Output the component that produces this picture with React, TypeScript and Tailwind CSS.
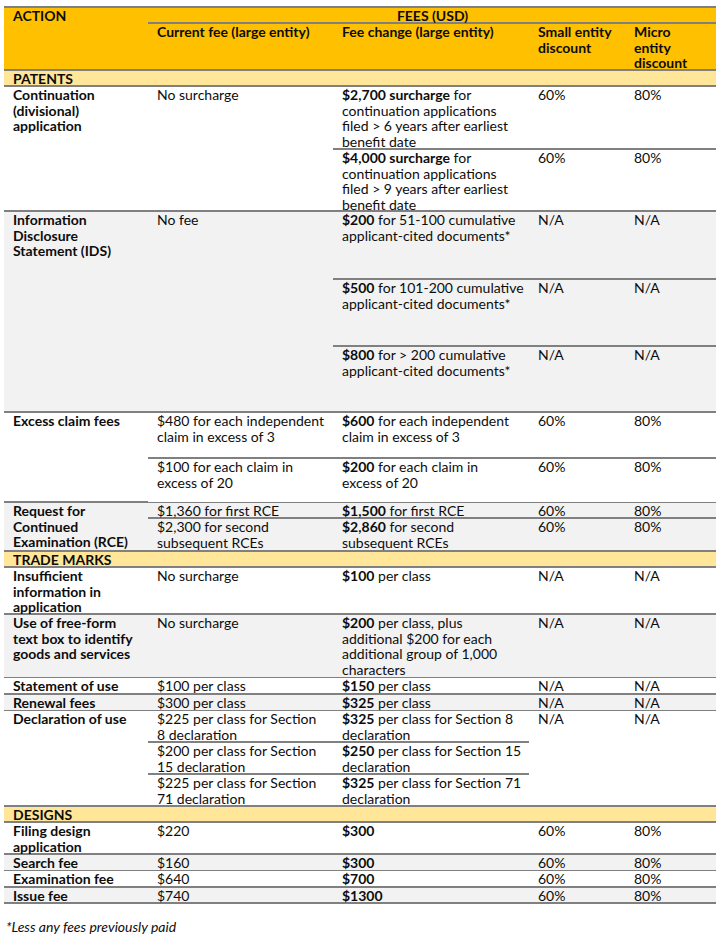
import type { ReactNode } from 'react'

const line = 'border-b-2 border-[#808080]'
const thin = 'border-b border-[#808080]'

function Td({
  children,
  className = '',
  rowSpan,
  colSpan,
  b = line,
  h = '',
}: {
  children?: ReactNode
  className?: string
  rowSpan?: number
  colSpan?: number
  b?: string
  h?: string
}) {
  return (
    <td rowSpan={rowSpan} colSpan={colSpan} className={`align-top p-0 pl-[9px] pr-[8px] ${b} ${className}`}>
      <div className={h}>{children}</div>
    </td>
  )
}

// fee change column is a touch wider
function Fc(props: { children?: ReactNode; b?: string; h?: string; className?: string }) {
  return <Td {...props} className={`!pr-[4px] ${props.className ?? ''}`} />
}

function Section({ title }: { title: string }) {
  return (
    <tr className="bg-[#FFE699]">
      <Td colSpan={5} className="font-bold" h="h-[14px]">
        {title}
      </Td>
    </tr>
  )
}

// one row of the five columns, all cells same height
function Row({
  cells,
  h,
  b = line,
  bg = '',
}: {
  cells: ReactNode[]
  h: string
  b?: string
  bg?: string
}) {
  return (
    <tr className={bg}>
      {cells.map((c, i) =>
        i === 2 ? (
          <Fc key={i} b={b} h={h}>
            {c}
          </Fc>
        ) : (
          <Td key={i} b={b} h={h} className={i === 0 ? 'font-bold' : ''}>
            {c}
          </Td>
        ),
      )}
    </tr>
  )
}

export default function App() {
  return (
    <div
      className="min-h-[935px] bg-white pl-[4px] pt-[6px] text-[14px] leading-[15.5px] text-[#0d0d0d]"
      style={{ fontFamily: 'Lato, "Open Sans", sans-serif' }}
    >
      <div className="w-[712px] border-t-2 border-[#808080]">
        <table className="w-[712px] table-fixed border-separate border-spacing-0">
          <colgroup>
            <col className="w-[144px]" />
            <col className="w-[185px]" />
            <col className="w-[196px]" />
            <col className="w-[96px]" />
            <col className="w-[91px]" />
          </colgroup>
          <tbody>
            <tr className="bg-[#FFC000] font-bold">
              <Td rowSpan={2}>ACTION</Td>
              <Td colSpan={4} className="text-center" h="h-[14px]">
                FEES (USD)
              </Td>
            </tr>
            <tr className="bg-[#FFC000] font-bold">
              <Td h="h-[45px]">Current fee (large entity)</Td>
              <Fc h="h-[45px]">Fee change (large entity)</Fc>
              <Td h="h-[45px]">Small entity discount</Td>
              <Td h="h-[45px]">Micro entity discount</Td>
            </tr>

            <Section title="PATENTS" />
            <tr>
              <Td rowSpan={2} className="font-bold">
                Continuation (divisional) application
              </Td>
              <Td rowSpan={2}>No surcharge</Td>
              <Fc h="h-[61px]">
                <b>$2,700 surcharge</b> for continuation applications filed &gt; 6 years after earliest benefit date
              </Fc>
              <Td h="h-[61px]">60%</Td>
              <Td h="h-[61px]">80%</Td>
            </tr>
            <tr>
              <Fc h="h-[60px]">
                <b>$4,000 surcharge</b> for continuation applications filed &gt; 9 years after earliest benefit date
              </Fc>
              <Td h="h-[60px]">60%</Td>
              <Td h="h-[60px]">80%</Td>
            </tr>

            <tr className="bg-[#F2F2F2]">
              <Td rowSpan={3} className="font-bold">
                Information Disclosure Statement (IDS)
              </Td>
              <Td rowSpan={3}>No fee</Td>
              <Fc h="h-[66px]">
                <b>$200</b> for 51-100 cumulative applicant-cited documents*
              </Fc>
              <Td h="h-[66px]">N/A</Td>
              <Td h="h-[66px]">N/A</Td>
            </tr>
            <tr className="bg-[#F2F2F2]">
              <Fc h="h-[65px]">
                <b>$500</b> for 101-200 cumulative applicant-cited documents*
              </Fc>
              <Td h="h-[65px]">N/A</Td>
              <Td h="h-[65px]">N/A</Td>
            </tr>
            <tr className="bg-[#F2F2F2]">
              <Fc h="h-[64px]">
                <b>$800</b> for &gt; 200 cumulative applicant-cited documents*
              </Fc>
              <Td h="h-[64px]">N/A</Td>
              <Td h="h-[64px]">N/A</Td>
            </tr>

            <tr>
              <Td rowSpan={2} className="font-bold">
                Excess claim fees
              </Td>
              <Td h="h-[44px]">$480 for each independent claim in excess of 3</Td>
              <Fc h="h-[44px]">
                <b>$600</b> for each independent claim in excess of 3
              </Fc>
              <Td h="h-[44px]">60%</Td>
              <Td h="h-[44px]">80%</Td>
            </tr>
            <tr>
              <Td b={thin} h="h-[43px]">
                $100 for each claim in excess of 20
              </Td>
              <Fc b={thin} h="h-[43px]">
                <b>$200</b> for each claim in
                <br />
                excess of 20
              </Fc>
              <Td b={thin} h="h-[43px]">
                60%
              </Td>
              <Td b={thin} h="h-[43px]">
                80%
              </Td>
            </tr>

            <tr className="bg-[#F2F2F2]">
              <Td rowSpan={2} className="font-bold">
                Request for Continued Examination (RCE)
              </Td>
              <Td h="h-[14px]">$1,360 for first RCE</Td>
              <Fc h="h-[14px]">
                <b>$1,500</b> for first RCE
              </Fc>
              <Td h="h-[14px]">60%</Td>
              <Td h="h-[14px]">80%</Td>
            </tr>
            <tr className="bg-[#F2F2F2]">
              <Td h="h-[31px]">$2,300 for second subsequent RCEs</Td>
              <Fc h="h-[31px]">
                <b>$2,860</b> for second subsequent RCEs
              </Fc>
              <Td h="h-[31px]">60%</Td>
              <Td h="h-[31px]">80%</Td>
            </tr>

            <Section title="TRADE MARKS" />
            <Row
              h="h-[45px]"
              cells={[
                'Insufficient information in application',
                'No surcharge',
                <>
                  <b>$100</b> per class
                </>,
                'N/A',
                'N/A',
              ]}
            />
            <Row
              h="h-[62px]"
              b={thin}
              bg="bg-[#F2F2F2]"
              cells={[
                'Use of free-form text box to identify goods and services',
                'No surcharge',
                <>
                  <b>$200</b> per class, plus additional $200 for each additional group of 1,000 characters
                </>,
                'N/A',
                'N/A',
              ]}
            />
            <Row
              h="h-[15px]"
              cells={[
                'Statement of use',
                '$100 per class',
                <>
                  <b>$150</b> per class
                </>,
                'N/A',
                'N/A',
              ]}
            />
            <Row
              h="h-[15px]"
              b={thin}
              bg="bg-[#F2F2F2]"
              cells={[
                'Renewal fees',
                '$300 per class',
                <>
                  <b>$325</b> per class
                </>,
                'N/A',
                'N/A',
              ]}
            />
            <tr>
              <Td rowSpan={3} className="font-bold">
                Declaration of use
              </Td>
              <Td h="h-[30px]">$225 per class for Section 8 declaration</Td>
              <Fc h="h-[30px]">
                <b>$325</b> per class for Section 8 declaration
              </Fc>
              <Td rowSpan={3}>N/A</Td>
              <Td rowSpan={3}>N/A</Td>
            </tr>
            <tr>
              <Td h="h-[30px]">$200 per class for Section 15 declaration</Td>
              <Fc h="h-[30px]">
                <b>$250</b> per class for Section 15 declaration
              </Fc>
            </tr>
            <tr>
              <Td h="h-[30px]">$225 per class for Section 71 declaration</Td>
              <Fc h="h-[30px]">
                <b>$325</b> per class for Section 71 declaration
              </Fc>
            </tr>

            <Section title="DESIGNS" />
            <Row h="h-[30px]" cells={['Filing design application', '$220', <b>$300</b>, '60%', '80%']} />
            <Row h="h-[15px]" b={thin} bg="bg-[#F2F2F2]" cells={['Search fee', '$160', <b>$300</b>, '60%', '80%']} />
            <Row h="h-[15px]" cells={['Examination fee', '$640', <b>$700</b>, '60%', '80%']} />
            <Row h="h-[14px]" bg="bg-[#F2F2F2]" cells={['Issue fee', '$740', <b>$1300</b>, '60%', '80%']} />
          </tbody>
        </table>
      </div>
      <p className="mt-[15px] pl-[2px] text-[14px] italic">*Less any fees previously paid</p>
    </div>
  )
}
